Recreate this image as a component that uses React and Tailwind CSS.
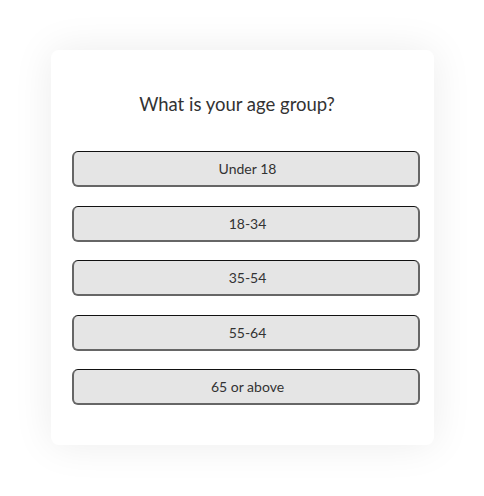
import React from 'react';

const options = ['Under 18', '18-34', '35-54', '55-64', '65 or above'];

export default function App() {
  return (
    <div className="w-[484px] h-[496px] bg-white flex items-start justify-center pt-[50px]" style={{ fontFamily: 'Lato, "Noto Sans", sans-serif' }}>
      <div className="w-[383px] h-[395px] bg-white rounded-lg shadow-[0_0_40px_rgba(0,0,0,0.08)] pl-[21px] pr-[14px] pt-[42px]">
        <h1 className="text-center text-[18.5px] leading-6 text-[#333] pr-[17px]">What is your age group?</h1>
        <div className="mt-[35px] flex flex-col gap-[18.5px]">
          {options.map((o) => (
            <button
              key={o}
              className="h-[36px] w-full rounded-md bg-[#e5e5e5] border border-t-[#111] border-l-2 border-l-[#666] border-r-2 border-r-[#666] border-b-2 border-b-[#666] text-[14px] text-[#333] flex items-center justify-center pl-[4px]"
            >
              {o}
            </button>
          ))}
        </div>
      </div>
    </div>
  );
}
